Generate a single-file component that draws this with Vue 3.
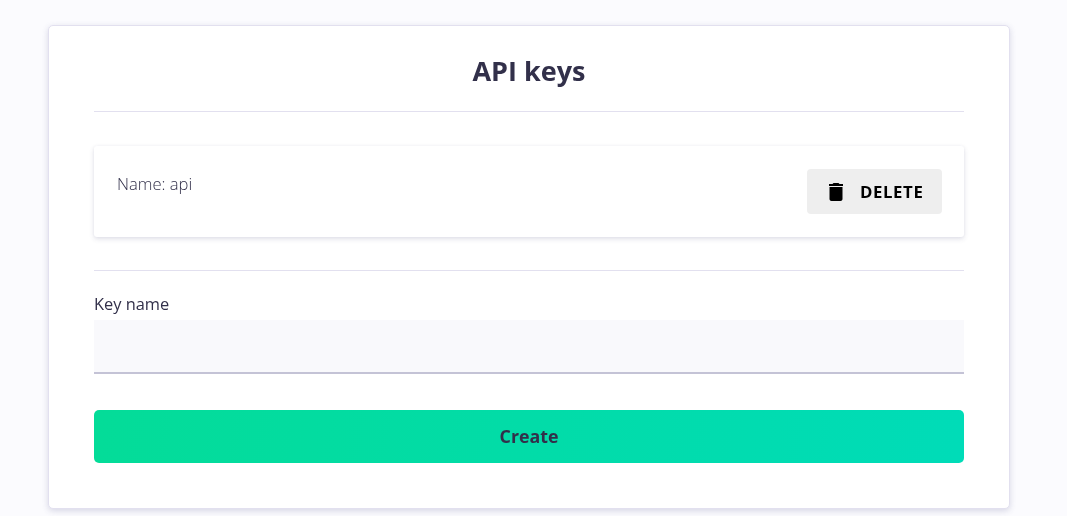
<script setup>
import { ref } from "vue";

const keys = ref([{ id: 1, name: "api" }])
const keyName = ref("")
</script>

<template>
  <div class="page">
    <div class="card">
      <h1 class="title">API keys</h1>
      <hr class="line" />
      <div v-for="key in keys" :key="key.id" class="key-row">
        <span class="key-name">Name: {{ key.name }}</span>
        <button class="delete" type="button">
          <svg class="trash" viewBox="0 0 24 24" width="24" height="24">
            <path fill="currentColor" d="M5.500 19c0 1.100.9 2 2 2h9c1.100 0 2-.9 2-2V7h-13v12zM19 4h-3.500l-1-1h-5l-1 1H5v2h14V4z" />
          </svg>
          <span>DELETE</span>
        </button>
      </div>
      <hr class="line second" />
      <label class="label" for="key-name">Key name</label>
      <input id="key-name" v-model="keyName" class="input" type="text" />
      <button class="create" type="button">Create</button>
    </div>
  </div>
</template>

<style scoped>
.page {
  box-sizing: border-box;
  height: 516px;
  padding: 25px 57px 0 48px;
  overflow: hidden;
  background: #fbfbfe;
  font-family: "Open Sans", sans-serif;
  color: #32304a;
}
.card {
  box-sizing: border-box;
  height: 484px;
  padding: 0 45px;
  background: #fff;
  border: 1px solid #e2e0ef;
  border-radius: 5px;
  box-shadow: 0 2px 6px rgba(70, 70, 130, 0.2);
  will-change: transform;
}
.title {
  margin: 0;
  height: 85px;
  line-height: 90px;
  font-size: 27px;
  font-weight: 700;
  text-align: center;
}
.line {
  margin: 0;
  height: 1px;
  border: 0;
  background: #e2e0ef;
}
.key-row {
  display: flex;
  justify-content: space-between;
  box-sizing: border-box;
  height: 91px;
  margin-top: 34px;
  padding: 23px 22px 0 23px;
  border-radius: 3px;
  background: #fff;
  box-shadow: 0 2px 5px rgba(60, 60, 110, 0.16), 0 0 3px rgba(60, 60, 110, 0.04);
}
.key-name {
  font-size: 16.6px;
  line-height: 30px;
  font-weight: 300;
}
.delete {
  display: flex;
  align-items: center;
  gap: 12px;
  box-sizing: border-box;
  width: 135px;
  height: 45px;
  padding: 0 0 0 17px;
  border: 0;
  border-radius: 4px;
  background: #eee;
  color: #000;
  font-family: inherit;
  font-size: 16.8px;
  font-weight: 700;
  letter-spacing: 0.6px;
}
.trash {
  flex: none;
}
.second {
  margin-top: 33px;
}
.label {
  display: block;
  margin-top: 22px;
  height: 27px;
  line-height: 21px;
  font-size: 16.4px;
  font-weight: 500;
}
.input {
  display: block;
  box-sizing: border-box;
  width: 100%;
  height: 54px;
  padding: 0 12px;
  border: 0;
  border-bottom: 2px solid #c4c3d6;
  background: #f9f9fc;
  outline: none;
}
.create {
  display: block;
  width: 100%;
  height: 53px;
  margin-top: 36px;
  padding: 0 0 2px;
  border: 0;
  border-radius: 5px;
  background: linear-gradient(100deg, #04dc98, #00dcb8);
  color: #32304a;
  font-family: inherit;
  font-size: 17.8px;
  font-weight: 700;
}
</style>
